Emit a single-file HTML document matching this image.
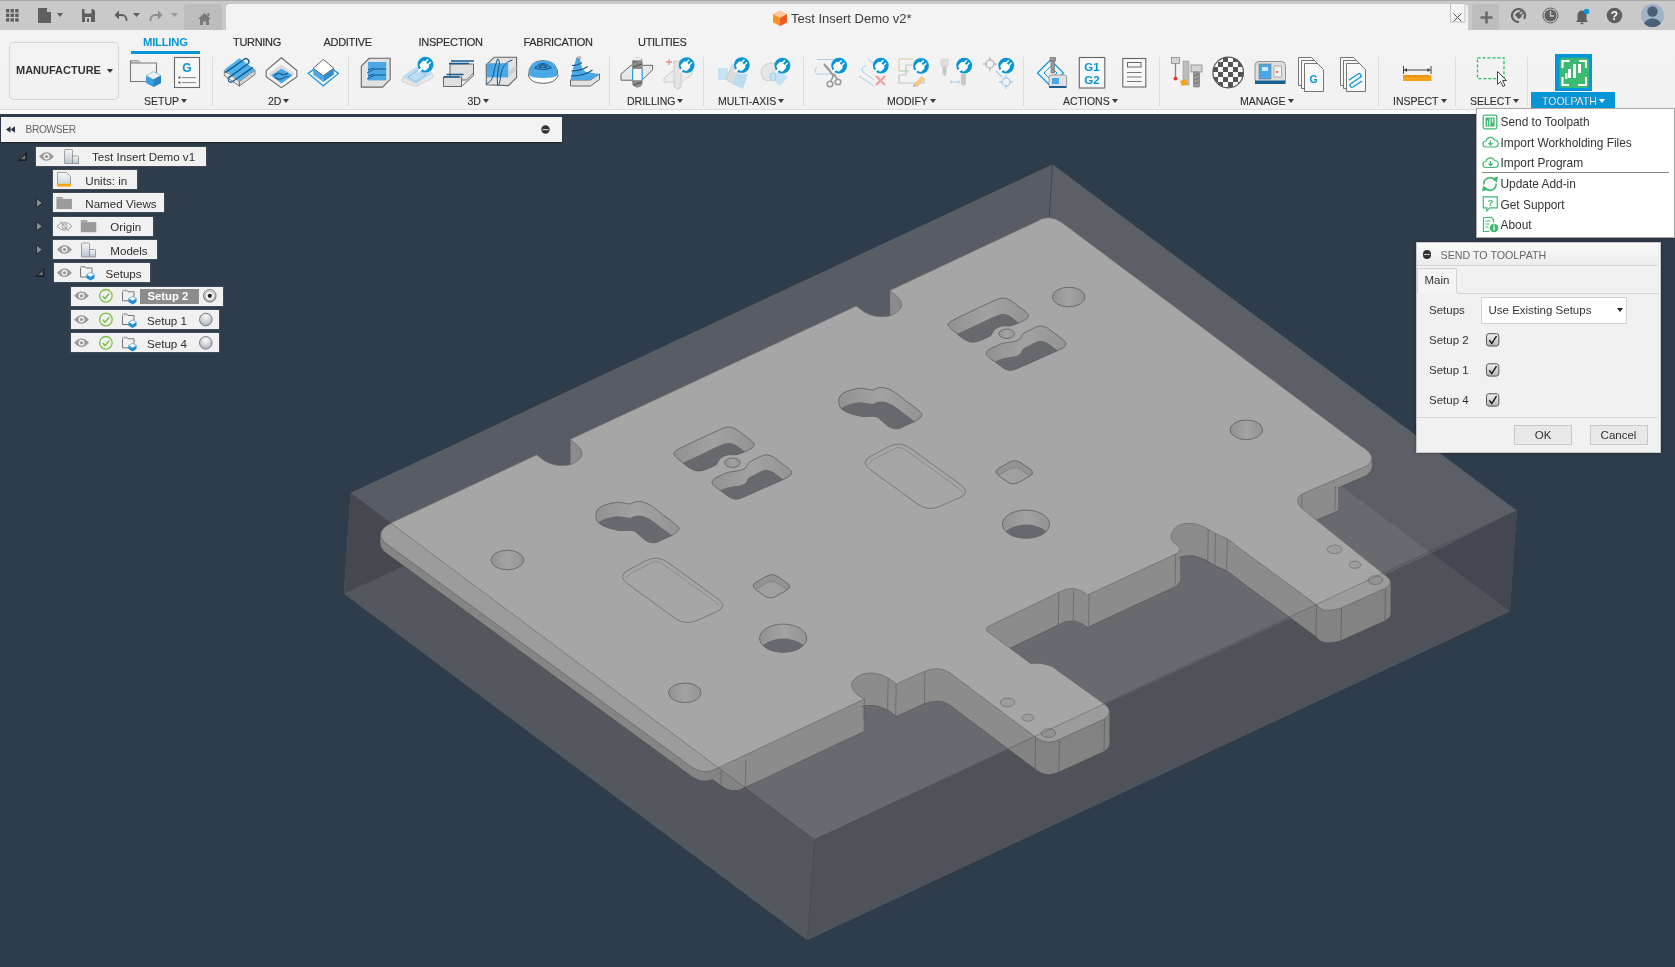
<!DOCTYPE html>
<html><head><meta charset="utf-8">
<style>
*{box-sizing:border-box;margin:0;padding:0}
html,body{will-change:transform;width:1675px;height:967px;overflow:hidden;background:#2f3c4b;font-family:"Liberation Sans",sans-serif;position:relative}
.abs{position:absolute}
#titlebar{left:0;top:0;width:1675px;height:30px;background:#c9c9c9;border-top:1px solid #a8a8a8}
#ribbon{left:0;top:30px;width:1675px;height:83.5px;background:linear-gradient(#f3f3f3 0,#f2f2f2 79.5px,#dcdcdc 79.5px,#dcdcdc 80.5px,#fdfdfd 80.5px,#fbfbfb 83.5px)}
.tab{position:absolute;top:35.5px;font-size:11px;color:#2e2e2e;white-space:nowrap;letter-spacing:-0.3px;-webkit-text-stroke:0.15px #2e2e2e}
.lbl{position:absolute;top:94.5px;font-size:10.5px;color:#2e2e2e;white-space:nowrap;-webkit-text-stroke:0.1px #2e2e2e}
.sep{position:absolute;top:57px;width:1px;height:49px;background:#dcdcdc}
.arr{display:inline-block;width:0;height:0;border-left:3px solid transparent;border-right:3px solid transparent;border-top:4px solid #3c3c3c;vertical-align:2px;margin-left:2px}
.row{position:absolute;height:19.3px;background:#f1f1f1;box-shadow:0 0 0 1px rgba(80,90,100,.5)}
.rt{position:absolute;top:3.5px;font-size:11.6px;color:#2e2e2e;white-space:nowrap}
.mi{position:absolute;left:23.5px;font-size:11.9px;color:#333;white-space:nowrap;margin-top:0.5px}
</style></head><body>
<svg width="1675" height="854" viewBox="0 113 1675 854" style="position:absolute;left:0;top:113px">
<defs>
<path id="pl" d="M1037.0,221.3 Q1048.6,213.5 1062.0,222.6 L1359.5,445.0 Q1380.0,457.0 1366.0,466.3 L1302.0,494.0 Q1293.0,500.0 1302.0,508.5 L1387.9,577.5 Q1394.0,583.0 1385.5,588.2 L1340.3,608.4 Q1322.0,614.0 1316.5,604.8 L1250.0,555.9 L1227.0,538.6 C1223.5,537.1 1219.9,535.7 1216.5,534.0 C1212.1,531.8 1208.1,528.6 1203.5,526.8 C1199.1,525.0 1194.5,523.4 1189.8,523.3 C1185.6,523.2 1181.0,523.9 1177.4,526.1 C1174.4,528.0 1172.3,531.4 1171.2,534.8 C1170.5,536.8 1171.3,539.2 1172.4,541.0 C1174.3,544.0 1178.7,545.2 1179.9,548.5 C1180.6,550.3 1177.8,551.8 1176.8,553.5 L1087.5,595.0 Q1074.0,584.0 1060.5,591.5 L989.2,626.0 Q983.0,629.0 989.2,632.8 L1030.9,663.7 Q1041.0,662.0 1052.4,666.9 L1106.2,705.4 Q1113.0,712.0 1104.9,718.8 L1060.5,739.0 Q1047.0,746.0 1036.3,737.6 L950.2,673.1 Q939.0,665.0 923.4,671.8 L896.5,683.9 C893.8,682.0 891.3,679.9 888.4,678.3 C885.2,676.6 882.0,675.0 878.5,674.0 C875.7,673.2 872.7,672.9 869.8,673.0 C866.6,673.2 863.3,673.5 860.5,674.9 C857.3,676.5 854.5,678.9 852.4,681.7 C851.4,683.1 851.3,685.1 851.8,686.7 C852.6,689.3 854.2,691.6 856.1,693.5 C858.4,695.8 861.5,697.2 864.2,699.1 L714.9,769.3 Q704.0,775.0 692.2,767.5 L384.0,542.0 Q374.0,531.0 393.0,522.0 L536.7,454.8 C539.5,456.9 542.1,459.4 545.1,461.1 C548.0,462.7 551.2,464.0 554.4,464.8 C557.5,465.5 560.7,465.7 563.8,465.5 C567.0,465.3 570.3,465.1 573.1,463.6 C576.6,461.7 580.2,459.1 581.8,455.5 C582.8,453.2 581.4,450.2 579.9,448.1 C577.3,444.6 573.3,442.3 570.0,439.4 L856.4,305.9 C859.2,308.0 861.8,310.5 864.8,312.2 C867.7,313.8 870.9,315.1 874.1,315.9 C877.2,316.6 880.4,316.8 883.5,316.6 C886.7,316.4 890.0,316.2 892.8,314.7 C896.3,312.8 899.9,310.2 901.5,306.6 C902.5,304.3 901.1,301.3 899.6,299.2 C897.0,295.7 893.0,293.4 889.7,290.5 Z"/>
<clipPath id="tallclip"><path d="M300,471.5 L721.3,785 Q731,793 745.9,788 L745.9,967 L1700,967 L1700,530 L1338,530 L1338,430 L1700,430 L1700,100 L300,100 Z"/></clipPath>
<linearGradient id="gw" x1="0" x2="1" y1="0" y2="0"><stop offset="0" stop-color="#929292"/><stop offset="0.5" stop-color="#a2a2a2"/><stop offset="1" stop-color="#949494"/></linearGradient>
<clipPath id="dc0"><ellipse cx="1026.0" cy="524.2" rx="23.6" ry="14.1"/></clipPath>
<clipPath id="dc1"><ellipse cx="783.2" cy="638.2" rx="23.6" ry="14.1"/></clipPath>
<clipPath id="kc0"><path d="M838.7,401.1 C838.7,398.3 840.0,395.1 842.4,393.6 C847.4,390.5 853.4,389.2 859.2,388.3 C862.7,387.8 866.2,389.2 869.7,389.6 C870.9,389.7 872.2,390.1 873.4,389.9 C874.5,389.7 875.4,388.5 876.5,388.3 C879.0,387.8 881.5,387.2 884.0,387.7 C887.3,388.3 890.4,389.7 893.3,391.4 C897.8,394.1 901.8,397.8 906.0,401.0 C910.7,404.5 915.7,407.7 920.0,411.6 C921.0,412.5 922.4,414.1 921.8,415.3 C920.6,417.8 917.9,419.4 915.6,420.9 C913.0,422.6 909.9,423.5 907.0,424.8 C904.1,426.1 901.4,428.3 898.2,428.7 C895.3,429.1 892.2,428.4 889.6,427.1 C886.7,425.7 884.6,423.0 882.0,421.0 C880.0,419.5 878.3,417.1 875.9,416.6 C871.1,415.5 865.9,417.3 861.0,416.3 C854.6,415.0 847.8,413.4 842.4,409.7 C839.8,407.9 838.7,404.2 838.7,401.1 Z"/></clipPath>
<clipPath id="kc1"><path d="M595.9,515.1 C595.9,512.3 597.2,509.1 599.6,507.6 C604.6,504.5 610.6,503.2 616.4,502.3 C619.9,501.8 623.4,503.2 626.9,503.6 C628.1,503.7 629.4,504.1 630.6,503.9 C631.7,503.7 632.6,502.5 633.7,502.3 C636.2,501.8 638.7,501.2 641.2,501.7 C644.5,502.3 647.6,503.7 650.5,505.4 C655.0,508.1 659.0,511.8 663.2,515.0 C667.9,518.5 672.9,521.7 677.2,525.6 C678.2,526.5 679.6,528.1 679.0,529.3 C677.8,531.8 675.1,533.4 672.8,534.9 C670.2,536.6 667.1,537.5 664.2,538.8 C661.3,540.1 658.6,542.3 655.4,542.7 C652.5,543.1 649.4,542.4 646.8,541.1 C643.9,539.7 641.8,537.0 639.2,535.0 C637.2,533.5 635.5,531.1 633.1,530.6 C628.3,529.5 623.1,531.3 618.2,530.3 C611.8,529.0 605.0,527.4 599.6,523.7 C597.0,521.9 595.9,518.2 595.9,515.1 Z"/></clipPath>
<clipPath id="pc00"><path d="M948.1,325.0 C947.5,323.7 949.4,322.1 950.7,321.4 C958.2,317.1 966.2,313.7 974.0,310.0 C982.1,306.2 990.0,302.2 998.3,298.9 C1000.1,298.2 1002.0,297.9 1003.9,298.1 C1006.1,298.3 1008.3,299.1 1010.2,300.2 C1013.0,301.8 1015.4,304.0 1018.0,306.0 C1021.1,308.3 1024.4,310.5 1027.2,313.1 C1027.9,313.8 1028.7,314.7 1028.5,315.7 C1028.3,317.1 1027.4,318.6 1026.2,319.3 C1021.7,321.9 1016.8,324.1 1011.7,325.5 C1008.5,326.4 1005.1,325.4 1001.9,326.0 C999.7,326.4 997.6,327.4 995.7,328.6 C994.4,329.5 993.5,330.9 992.6,332.2 C991.8,333.3 991.7,335.1 990.5,335.8 C986.3,338.3 981.7,340.0 977.1,341.5 C975.1,342.1 972.9,342.3 970.9,342.0 C968.7,341.6 966.5,340.7 964.6,339.5 C961.5,337.6 958.7,335.4 956.0,333.0 C953.2,330.5 949.7,328.4 948.1,325.0 Z"/></clipPath>
<clipPath id="pc01"><path d="M986.3,353.0 C986.5,351.6 987.7,350.4 988.8,349.6 C990.6,348.3 992.8,347.7 994.8,346.7 C996.8,345.8 998.7,344.6 1000.8,343.9 C1002.4,343.3 1004.2,343.1 1005.9,342.8 C1008.9,342.2 1012.0,342.1 1015.0,341.3 C1016.8,340.8 1018.7,340.0 1020.1,338.8 C1021.1,338.0 1021.1,336.4 1021.8,335.4 C1022.4,334.5 1023.2,333.7 1024.1,333.1 C1026.0,331.9 1028.0,331.0 1030.0,330.0 C1032.2,328.9 1034.3,327.6 1036.6,326.8 C1038.1,326.3 1039.7,325.8 1041.2,326.0 C1043.4,326.2 1045.5,326.9 1047.4,328.0 C1050.3,329.6 1052.8,332.0 1055.5,334.0 C1058.3,336.1 1061.3,338.1 1063.9,340.5 C1064.9,341.4 1066.1,342.6 1065.9,343.9 C1065.7,345.6 1064.3,347.1 1062.8,347.9 C1055.5,352.0 1047.6,355.0 1040.0,358.4 C1032.1,362.0 1024.2,365.7 1016.1,368.9 C1014.3,369.6 1012.4,370.3 1010.4,370.3 C1008.5,370.3 1006.5,369.8 1004.8,368.9 C1001.6,367.2 998.9,364.6 996.0,362.5 C993.2,360.5 990.2,358.8 987.7,356.4 C986.8,355.5 986.1,354.2 986.3,353.0 Z"/></clipPath>
<clipPath id="pc10"><path d="M673.8,453.9 C673.2,452.6 675.1,451.0 676.4,450.3 C683.9,446.0 691.9,442.6 699.7,438.9 C707.8,435.1 715.7,431.1 724.0,427.8 C725.8,427.1 727.7,426.8 729.6,427.0 C731.8,427.2 734.0,428.0 735.9,429.1 C738.7,430.7 741.1,432.9 743.7,434.9 C746.8,437.2 750.1,439.4 752.9,442.0 C753.6,442.7 754.4,443.6 754.2,444.6 C754.0,446.0 753.1,447.5 751.9,448.2 C747.4,450.8 742.5,453.0 737.4,454.4 C734.2,455.3 730.8,454.3 727.6,454.9 C725.4,455.3 723.3,456.3 721.4,457.5 C720.1,458.4 719.2,459.8 718.3,461.1 C717.5,462.2 717.4,464.0 716.2,464.7 C712.0,467.2 707.4,468.9 702.8,470.4 C700.8,471.0 698.6,471.2 696.6,470.9 C694.4,470.5 692.2,469.6 690.3,468.4 C687.2,466.5 684.4,464.3 681.7,461.9 C678.9,459.4 675.4,457.3 673.8,453.9 Z"/></clipPath>
<clipPath id="pc11"><path d="M712.0,481.9 C712.2,480.5 713.4,479.3 714.5,478.5 C716.3,477.2 718.5,476.6 720.5,475.6 C722.5,474.7 724.4,473.5 726.5,472.8 C728.1,472.2 729.9,472.0 731.6,471.7 C734.6,471.1 737.7,471.0 740.7,470.2 C742.5,469.7 744.4,468.9 745.8,467.7 C746.8,466.9 746.8,465.3 747.5,464.3 C748.1,463.4 748.9,462.6 749.8,462.0 C751.7,460.8 753.7,459.9 755.7,458.9 C757.9,457.8 760.0,456.5 762.3,455.7 C763.8,455.2 765.4,454.7 766.9,454.9 C769.1,455.1 771.2,455.8 773.1,456.9 C776.0,458.5 778.5,460.9 781.2,462.9 C784.0,465.0 787.0,467.0 789.6,469.4 C790.6,470.3 791.8,471.5 791.6,472.8 C791.4,474.5 790.0,476.0 788.5,476.8 C781.2,480.9 773.3,483.9 765.7,487.3 C757.8,490.9 749.9,494.6 741.8,497.8 C740.0,498.5 738.1,499.2 736.1,499.2 C734.2,499.2 732.2,498.7 730.5,497.8 C727.3,496.1 724.6,493.5 721.7,491.4 C718.9,489.4 715.9,487.7 713.4,485.3 C712.5,484.4 711.8,483.1 712.0,481.9 Z"/></clipPath>
<clipPath id="sq0"><path d="M998.7,475.7 Q993.0,471.6 999.1,468.1 L1009.1,462.3 Q1015.2,458.8 1021.0,462.8 L1029.7,468.8 Q1035.5,472.8 1029.4,476.3 L1018.9,482.3 Q1012.8,485.8 1007.1,481.7 Z"/></clipPath>
<clipPath id="sq1"><path d="M755.9,589.7 Q750.2,585.6 756.3,582.1 L766.3,576.3 Q772.4,572.8 778.2,576.8 L786.9,582.8 Q792.7,586.8 786.6,590.3 L776.1,596.3 Q770.0,599.8 764.3,595.7 Z"/></clipPath>
</defs>
<polygon points="350.6,493.0 1052.5,164.6 1516.7,510.6 1509.8,611.2 807.4,940.1 344.0,593.8" fill="#5a5d64"/>
<polygon points="350.6,493.0 814.5,839.6 807.4,940.1 344.0,593.8" fill="#5a5e64"/>
<polygon points="814.5,839.6 1516.7,510.6 1509.8,611.2 807.4,940.1" fill="#555860"/>
<polygon points="350.6,493.0 431.0,553.5 344.0,593.8" fill="#4a4d54"/>
<polygon points="1516.7,510.6 1509.8,611.2 1431.4,553.0" fill="#494c54"/>
<polygon points="431.0,553.5 1046.0,265.0 1431.4,553.0 814.5,839.6" fill="#686a70"/>
<polygon points="350.6,493.0 1052.5,164.6 1046.0,265.0 431.0,553.5" fill="#585c64"/>
<polygon points="1052.5,164.6 1516.7,510.6 1431.4,553.0 1046.0,265.0" fill="#5c5f66"/>
<line x1="1052.5" y1="164.6" x2="1049" y2="222" stroke="#41444b" stroke-width="0.9"/>
<g fill="#8e8e8e"><use href="#pl" y="9" stroke="#5a5a5a" stroke-width="1.3"/><use href="#pl" y="1"/><use href="#pl" y="2"/><use href="#pl" y="3"/><use href="#pl" y="4"/><use href="#pl" y="5"/><use href="#pl" y="6"/><use href="#pl" y="7"/><use href="#pl" y="8"/><use href="#pl" y="9"/></g>
<g fill="#8c8c8c" clip-path="url(#tallclip)"><use href="#pl" y="32" stroke="#5a5a5a" stroke-width="1.3"/><use href="#pl" y="10"/><use href="#pl" y="11"/><use href="#pl" y="12"/><use href="#pl" y="13"/><use href="#pl" y="14"/><use href="#pl" y="15"/><use href="#pl" y="16"/><use href="#pl" y="17"/><use href="#pl" y="18"/><use href="#pl" y="19"/><use href="#pl" y="20"/><use href="#pl" y="21"/><use href="#pl" y="22"/><use href="#pl" y="23"/><use href="#pl" y="24"/><use href="#pl" y="25"/><use href="#pl" y="26"/><use href="#pl" y="27"/><use href="#pl" y="28"/><use href="#pl" y="29"/><use href="#pl" y="30"/><use href="#pl" y="31"/><use href="#pl" y="32"/></g>
<g stroke="#5e5e5e" stroke-width="0.8" opacity="0.8"><line x1="1058.9" y1="592" x2="1058.3000000000002" y2="624"/><line x1="1073.7" y1="590" x2="1073.1000000000001" y2="621"/><line x1="1089.1" y1="594" x2="1088.5" y2="626"/><line x1="1035.6" y1="737" x2="1035.0" y2="771.5"/><line x1="1059.4" y1="739" x2="1058.8000000000002" y2="772"/><line x1="1104.6" y1="718" x2="1104.0" y2="751"/><line x1="1316.5" y1="604" x2="1315.9" y2="642"/><line x1="1341.5" y1="607" x2="1340.9" y2="642"/><line x1="1385.5" y1="588" x2="1384.9" y2="620"/><line x1="1302.2" y1="494" x2="1301.6000000000001" y2="513"/><line x1="1335.5" y1="486" x2="1334.9" y2="510"/><line x1="1175.7" y1="553.7" x2="1175.1000000000001" y2="584.6"/><line x1="1208.3" y1="528" x2="1207.7" y2="563"/><line x1="1215.4" y1="534" x2="1214.8000000000002" y2="567"/><line x1="1227.3" y1="538" x2="1226.7" y2="570"/><line x1="889.7" y1="290.5" x2="889.1" y2="316"/><line x1="570" y1="439.4" x2="569.4" y2="465"/><line x1="888.1" y1="678.6" x2="887.5" y2="711.5"/><line x1="896.2" y1="684" x2="895.6" y2="718"/><line x1="925" y1="671" x2="924.4" y2="704"/><line x1="864.5" y1="699" x2="863.9" y2="720"/><line x1="721.3" y1="770" x2="720.6999999999999" y2="785"/><line x1="745.9" y1="760" x2="745.3" y2="788"/></g>
<use href="#pl" fill="#a6a6a6" stroke="#6e6e6e" stroke-width="0.8"/>
<ellipse cx="1068.7" cy="297" rx="16.3" ry="9.8" fill="url(#gw)" stroke="#5e5e5e" stroke-width="0.8"/>
<ellipse cx="1246.4" cy="429.8" rx="16.3" ry="9.8" fill="url(#gw)" stroke="#5e5e5e" stroke-width="0.8"/>
<ellipse cx="507.3" cy="560" rx="16.3" ry="9.8" fill="url(#gw)" stroke="#5e5e5e" stroke-width="0.8"/>
<ellipse cx="684.9" cy="692.8" rx="16.3" ry="9.8" fill="url(#gw)" stroke="#5e5e5e" stroke-width="0.8"/>
<ellipse cx="1026.0" cy="524.2" rx="23.6" ry="14.1" fill="url(#gw)"/>
<ellipse cx="1026.0" cy="538.7" rx="23.6" ry="14.1" fill="#67696e" clip-path="url(#dc0)"/>
<ellipse cx="1026.0" cy="524.2" rx="23.6" ry="14.1" fill="none" stroke="#5e5e5e" stroke-width="0.8"/>
<ellipse cx="783.2" cy="638.2" rx="23.6" ry="14.1" fill="url(#gw)"/>
<ellipse cx="783.2" cy="652.7" rx="23.6" ry="14.1" fill="#67696e" clip-path="url(#dc1)"/>
<ellipse cx="783.2" cy="638.2" rx="23.6" ry="14.1" fill="none" stroke="#5e5e5e" stroke-width="0.8"/>
<path d="M838.7,401.1 C838.7,398.3 840.0,395.1 842.4,393.6 C847.4,390.5 853.4,389.2 859.2,388.3 C862.7,387.8 866.2,389.2 869.7,389.6 C870.9,389.7 872.2,390.1 873.4,389.9 C874.5,389.7 875.4,388.5 876.5,388.3 C879.0,387.8 881.5,387.2 884.0,387.7 C887.3,388.3 890.4,389.7 893.3,391.4 C897.8,394.1 901.8,397.8 906.0,401.0 C910.7,404.5 915.7,407.7 920.0,411.6 C921.0,412.5 922.4,414.1 921.8,415.3 C920.6,417.8 917.9,419.4 915.6,420.9 C913.0,422.6 909.9,423.5 907.0,424.8 C904.1,426.1 901.4,428.3 898.2,428.7 C895.3,429.1 892.2,428.4 889.6,427.1 C886.7,425.7 884.6,423.0 882.0,421.0 C880.0,419.5 878.3,417.1 875.9,416.6 C871.1,415.5 865.9,417.3 861.0,416.3 C854.6,415.0 847.8,413.4 842.4,409.7 C839.8,407.9 838.7,404.2 838.7,401.1 Z" fill="url(#gw)"/>
<path d="M838.7,415.1 C838.7,412.3 840.0,409.1 842.4,407.6 C847.4,404.5 853.4,403.2 859.2,402.3 C862.7,401.8 866.2,403.2 869.7,403.6 C870.9,403.7 872.2,404.1 873.4,403.9 C874.5,403.7 875.4,402.5 876.5,402.3 C879.0,401.8 881.5,401.2 884.0,401.7 C887.3,402.3 890.4,403.7 893.3,405.4 C897.8,408.1 901.8,411.8 906.0,415.0 C910.7,418.5 915.7,421.7 920.0,425.6 C921.0,426.5 922.4,428.1 921.8,429.3 C920.6,431.8 917.9,433.4 915.6,434.9 C913.0,436.6 909.9,437.5 907.0,438.8 C904.1,440.1 901.4,442.3 898.2,442.7 C895.3,443.1 892.2,442.4 889.6,441.1 C886.7,439.7 884.6,437.0 882.0,435.0 C880.0,433.5 878.3,431.1 875.9,430.6 C871.1,429.5 865.9,431.3 861.0,430.3 C854.6,429.0 847.8,427.4 842.4,423.7 C839.8,421.9 838.7,418.2 838.7,415.1 Z" fill="#67696e" clip-path="url(#kc0)"/>
<path d="M838.7,401.1 C838.7,398.3 840.0,395.1 842.4,393.6 C847.4,390.5 853.4,389.2 859.2,388.3 C862.7,387.8 866.2,389.2 869.7,389.6 C870.9,389.7 872.2,390.1 873.4,389.9 C874.5,389.7 875.4,388.5 876.5,388.3 C879.0,387.8 881.5,387.2 884.0,387.7 C887.3,388.3 890.4,389.7 893.3,391.4 C897.8,394.1 901.8,397.8 906.0,401.0 C910.7,404.5 915.7,407.7 920.0,411.6 C921.0,412.5 922.4,414.1 921.8,415.3 C920.6,417.8 917.9,419.4 915.6,420.9 C913.0,422.6 909.9,423.5 907.0,424.8 C904.1,426.1 901.4,428.3 898.2,428.7 C895.3,429.1 892.2,428.4 889.6,427.1 C886.7,425.7 884.6,423.0 882.0,421.0 C880.0,419.5 878.3,417.1 875.9,416.6 C871.1,415.5 865.9,417.3 861.0,416.3 C854.6,415.0 847.8,413.4 842.4,409.7 C839.8,407.9 838.7,404.2 838.7,401.1 Z" fill="none" stroke="#5e5e5e" stroke-width="0.8"/>
<path d="M595.9,515.1 C595.9,512.3 597.2,509.1 599.6,507.6 C604.6,504.5 610.6,503.2 616.4,502.3 C619.9,501.8 623.4,503.2 626.9,503.6 C628.1,503.7 629.4,504.1 630.6,503.9 C631.7,503.7 632.6,502.5 633.7,502.3 C636.2,501.8 638.7,501.2 641.2,501.7 C644.5,502.3 647.6,503.7 650.5,505.4 C655.0,508.1 659.0,511.8 663.2,515.0 C667.9,518.5 672.9,521.7 677.2,525.6 C678.2,526.5 679.6,528.1 679.0,529.3 C677.8,531.8 675.1,533.4 672.8,534.9 C670.2,536.6 667.1,537.5 664.2,538.8 C661.3,540.1 658.6,542.3 655.4,542.7 C652.5,543.1 649.4,542.4 646.8,541.1 C643.9,539.7 641.8,537.0 639.2,535.0 C637.2,533.5 635.5,531.1 633.1,530.6 C628.3,529.5 623.1,531.3 618.2,530.3 C611.8,529.0 605.0,527.4 599.6,523.7 C597.0,521.9 595.9,518.2 595.9,515.1 Z" fill="url(#gw)"/>
<path d="M595.9,529.1 C595.9,526.3 597.2,523.1 599.6,521.6 C604.6,518.5 610.6,517.2 616.4,516.3 C619.9,515.8 623.4,517.2 626.9,517.6 C628.1,517.7 629.4,518.1 630.6,517.9 C631.7,517.7 632.6,516.5 633.7,516.3 C636.2,515.8 638.7,515.2 641.2,515.7 C644.5,516.3 647.6,517.7 650.5,519.4 C655.0,522.1 659.0,525.8 663.2,529.0 C667.9,532.5 672.9,535.7 677.2,539.6 C678.2,540.5 679.6,542.1 679.0,543.3 C677.8,545.8 675.1,547.4 672.8,548.9 C670.2,550.6 667.1,551.5 664.2,552.8 C661.3,554.1 658.6,556.3 655.4,556.7 C652.5,557.1 649.4,556.4 646.8,555.1 C643.9,553.7 641.8,551.0 639.2,549.0 C637.2,547.5 635.5,545.1 633.1,544.6 C628.3,543.5 623.1,545.3 618.2,544.3 C611.8,543.0 605.0,541.4 599.6,537.7 C597.0,535.9 595.9,532.2 595.9,529.1 Z" fill="#67696e" clip-path="url(#kc1)"/>
<path d="M595.9,515.1 C595.9,512.3 597.2,509.1 599.6,507.6 C604.6,504.5 610.6,503.2 616.4,502.3 C619.9,501.8 623.4,503.2 626.9,503.6 C628.1,503.7 629.4,504.1 630.6,503.9 C631.7,503.7 632.6,502.5 633.7,502.3 C636.2,501.8 638.7,501.2 641.2,501.7 C644.5,502.3 647.6,503.7 650.5,505.4 C655.0,508.1 659.0,511.8 663.2,515.0 C667.9,518.5 672.9,521.7 677.2,525.6 C678.2,526.5 679.6,528.1 679.0,529.3 C677.8,531.8 675.1,533.4 672.8,534.9 C670.2,536.6 667.1,537.5 664.2,538.8 C661.3,540.1 658.6,542.3 655.4,542.7 C652.5,543.1 649.4,542.4 646.8,541.1 C643.9,539.7 641.8,537.0 639.2,535.0 C637.2,533.5 635.5,531.1 633.1,530.6 C628.3,529.5 623.1,531.3 618.2,530.3 C611.8,529.0 605.0,527.4 599.6,523.7 C597.0,521.9 595.9,518.2 595.9,515.1 Z" fill="none" stroke="#5e5e5e" stroke-width="0.8"/>
<path d="M948.1,325.0 C947.5,323.7 949.4,322.1 950.7,321.4 C958.2,317.1 966.2,313.7 974.0,310.0 C982.1,306.2 990.0,302.2 998.3,298.9 C1000.1,298.2 1002.0,297.9 1003.9,298.1 C1006.1,298.3 1008.3,299.1 1010.2,300.2 C1013.0,301.8 1015.4,304.0 1018.0,306.0 C1021.1,308.3 1024.4,310.5 1027.2,313.1 C1027.9,313.8 1028.7,314.7 1028.5,315.7 C1028.3,317.1 1027.4,318.6 1026.2,319.3 C1021.7,321.9 1016.8,324.1 1011.7,325.5 C1008.5,326.4 1005.1,325.4 1001.9,326.0 C999.7,326.4 997.6,327.4 995.7,328.6 C994.4,329.5 993.5,330.9 992.6,332.2 C991.8,333.3 991.7,335.1 990.5,335.8 C986.3,338.3 981.7,340.0 977.1,341.5 C975.1,342.1 972.9,342.3 970.9,342.0 C968.7,341.6 966.5,340.7 964.6,339.5 C961.5,337.6 958.7,335.4 956.0,333.0 C953.2,330.5 949.7,328.4 948.1,325.0 Z" fill="url(#gw)"/>
<path d="M948.1,341.0 C947.5,339.7 949.4,338.1 950.7,337.4 C958.2,333.1 966.2,329.7 974.0,326.0 C982.1,322.2 990.0,318.2 998.3,314.9 C1000.1,314.2 1002.0,313.9 1003.9,314.1 C1006.1,314.3 1008.3,315.1 1010.2,316.2 C1013.0,317.8 1015.4,320.0 1018.0,322.0 C1021.1,324.3 1024.4,326.5 1027.2,329.1 C1027.9,329.8 1028.7,330.7 1028.5,331.7 C1028.3,333.1 1027.4,334.6 1026.2,335.3 C1021.7,337.9 1016.8,340.1 1011.7,341.5 C1008.5,342.4 1005.1,341.4 1001.9,342.0 C999.7,342.4 997.6,343.4 995.7,344.6 C994.4,345.5 993.5,346.9 992.6,348.2 C991.8,349.3 991.7,351.1 990.5,351.8 C986.3,354.3 981.7,356.0 977.1,357.5 C975.1,358.1 972.9,358.3 970.9,358.0 C968.7,357.6 966.5,356.7 964.6,355.5 C961.5,353.6 958.7,351.4 956.0,349.0 C953.2,346.5 949.7,344.4 948.1,341.0 Z" fill="#67696e" clip-path="url(#pc00)"/>
<path d="M948.1,325.0 C947.5,323.7 949.4,322.1 950.7,321.4 C958.2,317.1 966.2,313.7 974.0,310.0 C982.1,306.2 990.0,302.2 998.3,298.9 C1000.1,298.2 1002.0,297.9 1003.9,298.1 C1006.1,298.3 1008.3,299.1 1010.2,300.2 C1013.0,301.8 1015.4,304.0 1018.0,306.0 C1021.1,308.3 1024.4,310.5 1027.2,313.1 C1027.9,313.8 1028.7,314.7 1028.5,315.7 C1028.3,317.1 1027.4,318.6 1026.2,319.3 C1021.7,321.9 1016.8,324.1 1011.7,325.5 C1008.5,326.4 1005.1,325.4 1001.9,326.0 C999.7,326.4 997.6,327.4 995.7,328.6 C994.4,329.5 993.5,330.9 992.6,332.2 C991.8,333.3 991.7,335.1 990.5,335.8 C986.3,338.3 981.7,340.0 977.1,341.5 C975.1,342.1 972.9,342.3 970.9,342.0 C968.7,341.6 966.5,340.7 964.6,339.5 C961.5,337.6 958.7,335.4 956.0,333.0 C953.2,330.5 949.7,328.4 948.1,325.0 Z" fill="none" stroke="#5e5e5e" stroke-width="0.8"/>
<path d="M986.3,353.0 C986.5,351.6 987.7,350.4 988.8,349.6 C990.6,348.3 992.8,347.7 994.8,346.7 C996.8,345.8 998.7,344.6 1000.8,343.9 C1002.4,343.3 1004.2,343.1 1005.9,342.8 C1008.9,342.2 1012.0,342.1 1015.0,341.3 C1016.8,340.8 1018.7,340.0 1020.1,338.8 C1021.1,338.0 1021.1,336.4 1021.8,335.4 C1022.4,334.5 1023.2,333.7 1024.1,333.1 C1026.0,331.9 1028.0,331.0 1030.0,330.0 C1032.2,328.9 1034.3,327.6 1036.6,326.8 C1038.1,326.3 1039.7,325.8 1041.2,326.0 C1043.4,326.2 1045.5,326.9 1047.4,328.0 C1050.3,329.6 1052.8,332.0 1055.5,334.0 C1058.3,336.1 1061.3,338.1 1063.9,340.5 C1064.9,341.4 1066.1,342.6 1065.9,343.9 C1065.7,345.6 1064.3,347.1 1062.8,347.9 C1055.5,352.0 1047.6,355.0 1040.0,358.4 C1032.1,362.0 1024.2,365.7 1016.1,368.9 C1014.3,369.6 1012.4,370.3 1010.4,370.3 C1008.5,370.3 1006.5,369.8 1004.8,368.9 C1001.6,367.2 998.9,364.6 996.0,362.5 C993.2,360.5 990.2,358.8 987.7,356.4 C986.8,355.5 986.1,354.2 986.3,353.0 Z" fill="url(#gw)"/>
<path d="M986.3,368.0 C986.5,366.6 987.7,365.4 988.8,364.6 C990.6,363.3 992.8,362.7 994.8,361.7 C996.8,360.8 998.7,359.6 1000.8,358.9 C1002.4,358.3 1004.2,358.1 1005.9,357.8 C1008.9,357.2 1012.0,357.1 1015.0,356.3 C1016.8,355.8 1018.7,355.0 1020.1,353.8 C1021.1,353.0 1021.1,351.4 1021.8,350.4 C1022.4,349.5 1023.2,348.7 1024.1,348.1 C1026.0,346.9 1028.0,346.0 1030.0,345.0 C1032.2,343.9 1034.3,342.6 1036.6,341.8 C1038.1,341.3 1039.7,340.8 1041.2,341.0 C1043.4,341.2 1045.5,341.9 1047.4,343.0 C1050.3,344.6 1052.8,347.0 1055.5,349.0 C1058.3,351.1 1061.3,353.1 1063.9,355.5 C1064.9,356.4 1066.1,357.6 1065.9,358.9 C1065.7,360.6 1064.3,362.1 1062.8,362.9 C1055.5,367.0 1047.6,370.0 1040.0,373.4 C1032.1,377.0 1024.2,380.7 1016.1,383.9 C1014.3,384.6 1012.4,385.3 1010.4,385.3 C1008.5,385.3 1006.5,384.8 1004.8,383.9 C1001.6,382.2 998.9,379.6 996.0,377.5 C993.2,375.5 990.2,373.8 987.7,371.4 C986.8,370.5 986.1,369.2 986.3,368.0 Z" fill="#67696e" clip-path="url(#pc01)"/>
<path d="M986.3,353.0 C986.5,351.6 987.7,350.4 988.8,349.6 C990.6,348.3 992.8,347.7 994.8,346.7 C996.8,345.8 998.7,344.6 1000.8,343.9 C1002.4,343.3 1004.2,343.1 1005.9,342.8 C1008.9,342.2 1012.0,342.1 1015.0,341.3 C1016.8,340.8 1018.7,340.0 1020.1,338.8 C1021.1,338.0 1021.1,336.4 1021.8,335.4 C1022.4,334.5 1023.2,333.7 1024.1,333.1 C1026.0,331.9 1028.0,331.0 1030.0,330.0 C1032.2,328.9 1034.3,327.6 1036.6,326.8 C1038.1,326.3 1039.7,325.8 1041.2,326.0 C1043.4,326.2 1045.5,326.9 1047.4,328.0 C1050.3,329.6 1052.8,332.0 1055.5,334.0 C1058.3,336.1 1061.3,338.1 1063.9,340.5 C1064.9,341.4 1066.1,342.6 1065.9,343.9 C1065.7,345.6 1064.3,347.1 1062.8,347.9 C1055.5,352.0 1047.6,355.0 1040.0,358.4 C1032.1,362.0 1024.2,365.7 1016.1,368.9 C1014.3,369.6 1012.4,370.3 1010.4,370.3 C1008.5,370.3 1006.5,369.8 1004.8,368.9 C1001.6,367.2 998.9,364.6 996.0,362.5 C993.2,360.5 990.2,358.8 987.7,356.4 C986.8,355.5 986.1,354.2 986.3,353.0 Z" fill="none" stroke="#5e5e5e" stroke-width="0.8"/>
<ellipse cx="1006.7" cy="333.8" rx="7.8" ry="4.7" fill="url(#gw)" stroke="#5e5e5e" stroke-width="0.8"/>
<path d="M673.8,453.9 C673.2,452.6 675.1,451.0 676.4,450.3 C683.9,446.0 691.9,442.6 699.7,438.9 C707.8,435.1 715.7,431.1 724.0,427.8 C725.8,427.1 727.7,426.8 729.6,427.0 C731.8,427.2 734.0,428.0 735.9,429.1 C738.7,430.7 741.1,432.9 743.7,434.9 C746.8,437.2 750.1,439.4 752.9,442.0 C753.6,442.7 754.4,443.6 754.2,444.6 C754.0,446.0 753.1,447.5 751.9,448.2 C747.4,450.8 742.5,453.0 737.4,454.4 C734.2,455.3 730.8,454.3 727.6,454.9 C725.4,455.3 723.3,456.3 721.4,457.5 C720.1,458.4 719.2,459.8 718.3,461.1 C717.5,462.2 717.4,464.0 716.2,464.7 C712.0,467.2 707.4,468.9 702.8,470.4 C700.8,471.0 698.6,471.2 696.6,470.9 C694.4,470.5 692.2,469.6 690.3,468.4 C687.2,466.5 684.4,464.3 681.7,461.9 C678.9,459.4 675.4,457.3 673.8,453.9 Z" fill="url(#gw)"/>
<path d="M673.8,469.9 C673.2,468.6 675.1,467.0 676.4,466.3 C683.9,462.0 691.9,458.6 699.7,454.9 C707.8,451.1 715.7,447.1 724.0,443.8 C725.8,443.1 727.7,442.8 729.6,443.0 C731.8,443.2 734.0,444.0 735.9,445.1 C738.7,446.7 741.1,448.9 743.7,450.9 C746.8,453.2 750.1,455.4 752.9,458.0 C753.6,458.7 754.4,459.6 754.2,460.6 C754.0,462.0 753.1,463.5 751.9,464.2 C747.4,466.8 742.5,469.0 737.4,470.4 C734.2,471.3 730.8,470.3 727.6,470.9 C725.4,471.3 723.3,472.3 721.4,473.5 C720.1,474.4 719.2,475.8 718.3,477.1 C717.5,478.2 717.4,480.0 716.2,480.7 C712.0,483.2 707.4,484.9 702.8,486.4 C700.8,487.0 698.6,487.2 696.6,486.9 C694.4,486.5 692.2,485.6 690.3,484.4 C687.2,482.5 684.4,480.3 681.7,477.9 C678.9,475.4 675.4,473.3 673.8,469.9 Z" fill="#67696e" clip-path="url(#pc10)"/>
<path d="M673.8,453.9 C673.2,452.6 675.1,451.0 676.4,450.3 C683.9,446.0 691.9,442.6 699.7,438.9 C707.8,435.1 715.7,431.1 724.0,427.8 C725.8,427.1 727.7,426.8 729.6,427.0 C731.8,427.2 734.0,428.0 735.9,429.1 C738.7,430.7 741.1,432.9 743.7,434.9 C746.8,437.2 750.1,439.4 752.9,442.0 C753.6,442.7 754.4,443.6 754.2,444.6 C754.0,446.0 753.1,447.5 751.9,448.2 C747.4,450.8 742.5,453.0 737.4,454.4 C734.2,455.3 730.8,454.3 727.6,454.9 C725.4,455.3 723.3,456.3 721.4,457.5 C720.1,458.4 719.2,459.8 718.3,461.1 C717.5,462.2 717.4,464.0 716.2,464.7 C712.0,467.2 707.4,468.9 702.8,470.4 C700.8,471.0 698.6,471.2 696.6,470.9 C694.4,470.5 692.2,469.6 690.3,468.4 C687.2,466.5 684.4,464.3 681.7,461.9 C678.9,459.4 675.4,457.3 673.8,453.9 Z" fill="none" stroke="#5e5e5e" stroke-width="0.8"/>
<path d="M712.0,481.9 C712.2,480.5 713.4,479.3 714.5,478.5 C716.3,477.2 718.5,476.6 720.5,475.6 C722.5,474.7 724.4,473.5 726.5,472.8 C728.1,472.2 729.9,472.0 731.6,471.7 C734.6,471.1 737.7,471.0 740.7,470.2 C742.5,469.7 744.4,468.9 745.8,467.7 C746.8,466.9 746.8,465.3 747.5,464.3 C748.1,463.4 748.9,462.6 749.8,462.0 C751.7,460.8 753.7,459.9 755.7,458.9 C757.9,457.8 760.0,456.5 762.3,455.7 C763.8,455.2 765.4,454.7 766.9,454.9 C769.1,455.1 771.2,455.8 773.1,456.9 C776.0,458.5 778.5,460.9 781.2,462.9 C784.0,465.0 787.0,467.0 789.6,469.4 C790.6,470.3 791.8,471.5 791.6,472.8 C791.4,474.5 790.0,476.0 788.5,476.8 C781.2,480.9 773.3,483.9 765.7,487.3 C757.8,490.9 749.9,494.6 741.8,497.8 C740.0,498.5 738.1,499.2 736.1,499.2 C734.2,499.2 732.2,498.7 730.5,497.8 C727.3,496.1 724.6,493.5 721.7,491.4 C718.9,489.4 715.9,487.7 713.4,485.3 C712.5,484.4 711.8,483.1 712.0,481.9 Z" fill="url(#gw)"/>
<path d="M712.0,496.9 C712.2,495.5 713.4,494.3 714.5,493.5 C716.3,492.2 718.5,491.6 720.5,490.6 C722.5,489.7 724.4,488.5 726.5,487.8 C728.1,487.2 729.9,487.0 731.6,486.7 C734.6,486.1 737.7,486.0 740.7,485.2 C742.5,484.7 744.4,483.9 745.8,482.7 C746.8,481.9 746.8,480.3 747.5,479.3 C748.1,478.4 748.9,477.6 749.8,477.0 C751.7,475.8 753.7,474.9 755.7,473.9 C757.9,472.8 760.0,471.5 762.3,470.7 C763.8,470.2 765.4,469.7 766.9,469.9 C769.1,470.1 771.2,470.8 773.1,471.9 C776.0,473.5 778.5,475.9 781.2,477.9 C784.0,480.0 787.0,482.0 789.6,484.4 C790.6,485.3 791.8,486.5 791.6,487.8 C791.4,489.5 790.0,491.0 788.5,491.8 C781.2,495.9 773.3,498.9 765.7,502.3 C757.8,505.9 749.9,509.6 741.8,512.8 C740.0,513.5 738.1,514.2 736.1,514.2 C734.2,514.2 732.2,513.7 730.5,512.8 C727.3,511.1 724.6,508.5 721.7,506.4 C718.9,504.4 715.9,502.7 713.4,500.3 C712.5,499.4 711.8,498.1 712.0,496.9 Z" fill="#67696e" clip-path="url(#pc11)"/>
<path d="M712.0,481.9 C712.2,480.5 713.4,479.3 714.5,478.5 C716.3,477.2 718.5,476.6 720.5,475.6 C722.5,474.7 724.4,473.5 726.5,472.8 C728.1,472.2 729.9,472.0 731.6,471.7 C734.6,471.1 737.7,471.0 740.7,470.2 C742.5,469.7 744.4,468.9 745.8,467.7 C746.8,466.9 746.8,465.3 747.5,464.3 C748.1,463.4 748.9,462.6 749.8,462.0 C751.7,460.8 753.7,459.9 755.7,458.9 C757.9,457.8 760.0,456.5 762.3,455.7 C763.8,455.2 765.4,454.7 766.9,454.9 C769.1,455.1 771.2,455.8 773.1,456.9 C776.0,458.5 778.5,460.9 781.2,462.9 C784.0,465.0 787.0,467.0 789.6,469.4 C790.6,470.3 791.8,471.5 791.6,472.8 C791.4,474.5 790.0,476.0 788.5,476.8 C781.2,480.9 773.3,483.9 765.7,487.3 C757.8,490.9 749.9,494.6 741.8,497.8 C740.0,498.5 738.1,499.2 736.1,499.2 C734.2,499.2 732.2,498.7 730.5,497.8 C727.3,496.1 724.6,493.5 721.7,491.4 C718.9,489.4 715.9,487.7 713.4,485.3 C712.5,484.4 711.8,483.1 712.0,481.9 Z" fill="none" stroke="#5e5e5e" stroke-width="0.8"/>
<ellipse cx="732.4" cy="462.7" rx="7.8" ry="4.7" fill="url(#gw)" stroke="#5e5e5e" stroke-width="0.8"/>
<path d="M870.2,469.6 Q859.7,462.0 871.2,455.9 L888.4,446.8 Q899.9,440.7 910.4,448.3 L960.7,484.8 Q971.2,492.4 959.3,497.7 L939.9,506.4 Q928.0,511.7 917.5,504.1 Z" fill="none" stroke="#6c6c6c" stroke-width="0.8"/>
<path d="M868.6,464.6 L873.0,459.5 L897.0,447.5 L903.5,448.5 L958.5,488.0 L961.5,491.3" fill="none" stroke="#7a7a7a" stroke-width="0.6"/>
<path d="M627.4,583.6 Q616.9,576.0 628.4,569.9 L645.6,560.8 Q657.1,554.7 667.6,562.3 L717.9,598.8 Q728.4,606.4 716.5,611.7 L697.1,620.4 Q685.2,625.7 674.7,618.1 Z" fill="none" stroke="#6c6c6c" stroke-width="0.8"/>
<path d="M625.8,578.6 L630.2,573.5 L654.2,561.5 L660.7,562.5 L715.7,602.0 L718.7,605.3" fill="none" stroke="#7a7a7a" stroke-width="0.6"/>
<path d="M998.7,475.7 Q993.0,471.6 999.1,468.1 L1009.1,462.3 Q1015.2,458.8 1021.0,462.8 L1029.7,468.8 Q1035.5,472.8 1029.4,476.3 L1018.9,482.3 Q1012.8,485.8 1007.1,481.7 Z" fill="#939393"/>
<path d="M998.7,482.7 Q993.0,478.6 999.1,475.1 L1009.1,469.3 Q1015.2,465.8 1021.0,469.8 L1029.7,475.8 Q1035.5,479.8 1029.4,483.3 L1018.9,489.3 Q1012.8,492.8 1007.1,488.7 Z" fill="#a0a0a0" stroke="#777" stroke-width="0.6" clip-path="url(#sq0)"/>
<path d="M998.7,475.7 Q993.0,471.6 999.1,468.1 L1009.1,462.3 Q1015.2,458.8 1021.0,462.8 L1029.7,468.8 Q1035.5,472.8 1029.4,476.3 L1018.9,482.3 Q1012.8,485.8 1007.1,481.7 Z" fill="none" stroke="#5e5e5e" stroke-width="0.8"/>
<path d="M755.9,589.7 Q750.2,585.6 756.3,582.1 L766.3,576.3 Q772.4,572.8 778.2,576.8 L786.9,582.8 Q792.7,586.8 786.6,590.3 L776.1,596.3 Q770.0,599.8 764.3,595.7 Z" fill="#939393"/>
<path d="M755.9,596.7 Q750.2,592.6 756.3,589.1 L766.3,583.3 Q772.4,579.8 778.2,583.8 L786.9,589.8 Q792.7,593.8 786.6,597.3 L776.1,603.3 Q770.0,606.8 764.3,602.7 Z" fill="#a0a0a0" stroke="#777" stroke-width="0.6" clip-path="url(#sq1)"/>
<path d="M755.9,589.7 Q750.2,585.6 756.3,582.1 L766.3,576.3 Q772.4,572.8 778.2,576.8 L786.9,582.8 Q792.7,586.8 786.6,590.3 L776.1,596.3 Q770.0,599.8 764.3,595.7 Z" fill="none" stroke="#5e5e5e" stroke-width="0.8"/>
<ellipse cx="1334.6" cy="549.4" rx="7.3" ry="4.3" fill="#9d9d9d" stroke="#6a6a6a" stroke-width="0.7"/>
<ellipse cx="1354.9" cy="564.7" rx="5.8" ry="3.6" fill="#9d9d9d" stroke="#6a6a6a" stroke-width="0.7"/>
<ellipse cx="1375.4" cy="580.1" rx="7.3" ry="4.4" fill="#9d9d9d" stroke="#6a6a6a" stroke-width="0.7"/>
<ellipse cx="1007.6" cy="702.4" rx="7.3" ry="4.3" fill="#9d9d9d" stroke="#6a6a6a" stroke-width="0.7"/>
<ellipse cx="1027.9" cy="717.7" rx="5.8" ry="3.6" fill="#9d9d9d" stroke="#6a6a6a" stroke-width="0.7"/>
<ellipse cx="1048.4" cy="733.1" rx="7.3" ry="4.4" fill="#9d9d9d" stroke="#6a6a6a" stroke-width="0.7"/>
<polygon points="350.6,493.0 814.5,839.6 807.4,940.1 344.0,593.8" fill="#000" opacity="0.06"/>
<polygon points="814.5,839.6 1516.7,510.6 1509.8,611.2 807.4,940.1" fill="#000" opacity="0.06"/>
<polyline points="350.6,493.0 814.5,839.6 1516.7,510.6" fill="none" stroke="#3c3f46" stroke-width="0.8" opacity="0.45"/>
<polyline points="814.5,839.6 807.4,940.1" fill="none" stroke="#3c3f46" stroke-width="0.8" opacity="0.45"/>
</svg>
<div id="titlebar" class="abs"></div>
<div id="ribbon" class="abs"></div>
<!-- home tab -->
<div class="abs" style="left:184px;top:4px;width:38px;height:26px;background:#bdbdbd;border-radius:4px 4px 0 0"></div>
<!-- doc tab -->
<div class="abs" style="left:226px;top:4px;width:1242px;height:27px;background:#f3f3f3;border-radius:4px 4px 0 0"></div>
<div class="abs" style="left:1472px;top:4px;width:27px;height:26px;background:#bdbdbd;border-radius:4px 4px 0 0"></div>
<div class="abs" style="left:791px;top:11px;font-size:13px;color:#3a3a3a;white-space:nowrap">Test Insert Demo v2*</div>
<!-- manufacture -->
<div class="abs" style="left:8.5px;top:41.5px;width:110px;height:58.5px;border:1px solid #d6d6d6;border-radius:5px"></div>
<div class="abs" style="left:16px;top:63.5px;font-size:11px;font-weight:bold;color:#333;white-space:nowrap">MANUFACTURE</div>
<div class="abs" style="left:107px;top:69px;width:0;height:0;border-left:3px solid transparent;border-right:3px solid transparent;border-top:4px solid #333"></div>
<!-- tabs -->
<div class="tab" style="left:143px;color:#0696d7;font-weight:bold;font-size:11.3px;letter-spacing:-0.25px;-webkit-text-stroke:0">MILLING</div>
<div class="abs" style="left:131px;top:51px;width:69px;height:3px;background:#0696d7"></div>
<div class="tab" style="left:233px">TURNING</div>
<div class="tab" style="left:323.5px">ADDITIVE</div>
<div class="tab" style="left:418.5px">INSPECTION</div>
<div class="tab" style="left:523.5px">FABRICATION</div>
<div class="tab" style="left:638px">UTILITIES</div>
<!-- group labels -->
<div class="lbl" style="left:144px">SETUP<span class="arr"></span></div>
<div class="sep" style="left:212px"></div>
<div class="lbl" style="left:268px">2D<span class="arr"></span></div>
<div class="sep" style="left:348px"></div>
<div class="lbl" style="left:467.5px">3D<span class="arr"></span></div>
<div class="sep" style="left:609px"></div>
<div class="lbl" style="left:627px">DRILLING<span class="arr"></span></div>
<div class="sep" style="left:703px"></div>
<div class="lbl" style="left:718px">MULTI-AXIS<span class="arr"></span></div>
<div class="sep" style="left:803px"></div>
<div class="lbl" style="left:887px">MODIFY<span class="arr"></span></div>
<div class="sep" style="left:1023px"></div>
<div class="lbl" style="left:1063px">ACTIONS<span class="arr"></span></div>
<div class="sep" style="left:1159px"></div>
<div class="lbl" style="left:1240px">MANAGE<span class="arr"></span></div>
<div class="sep" style="left:1378px"></div>
<div class="lbl" style="left:1393px">INSPECT<span class="arr"></span></div>
<div class="sep" style="left:1455px"></div>
<div class="lbl" style="left:1470px">SELECT<span class="arr"></span></div>
<div class="sep" style="left:1527px"></div>
<div class="abs" style="left:1555px;top:54px;width:37px;height:37px;background:#0696d7"></div>
<div class="abs" style="left:1531px;top:92px;width:84px;height:16.5px;background:#0696d7"></div>
<div class="lbl" style="left:1542px;color:#fff">TOOLPATH<span class="arr" style="border-top-color:#fff"></span></div>
<svg class="abs" style="left:0;top:0" width="1675" height="113"><rect x="6.0" y="9.0" width="3.4" height="3.4" fill="#5f5f5f"/><rect x="6.0" y="13.6" width="3.4" height="3.4" fill="#5f5f5f"/><rect x="6.0" y="18.2" width="3.4" height="3.4" fill="#5f5f5f"/><rect x="10.6" y="9.0" width="3.4" height="3.4" fill="#5f5f5f"/><rect x="10.6" y="13.6" width="3.4" height="3.4" fill="#5f5f5f"/><rect x="10.6" y="18.2" width="3.4" height="3.4" fill="#5f5f5f"/><rect x="15.2" y="9.0" width="3.4" height="3.4" fill="#5f5f5f"/><rect x="15.2" y="13.6" width="3.4" height="3.4" fill="#5f5f5f"/><rect x="15.2" y="18.2" width="3.4" height="3.4" fill="#5f5f5f"/><path d="M38,8 h9 l4,4 v11 h-13 z" fill="#5f5f5f"/><path d="M47,8 v4 h4" fill="#c9c9c9"/><path d="M57,13 h6 l-3,4 z" fill="#5f5f5f"/><path d="M82,9 h11 l2,2 v11 h-13 z" fill="#5f5f5f"/><rect x="84.5" y="9" width="7" height="4.5" fill="#c9c9c9"/><rect x="85" y="17" width="6" height="5" fill="#c9c9c9"/><rect x="87" y="18.5" width="2" height="3.5" fill="#5f5f5f"/><path d="M117,15 h5 a4.5,4.5 0 0 1 4.5,4.5 v1.5" fill="none" stroke="#5f5f5f" stroke-width="1.8"/><path d="M114.5,15 l4.5,-4.5 v9 z" fill="#5f5f5f"/><path d="M133,13 h7 l-3.5,4 z" fill="#5f5f5f"/><path d="M160,15 h-5 a4.5,4.5 0 0 0 -4.5,4.5 v1.5" fill="none" stroke="#8e8e8e" stroke-width="1.8"/><path d="M162.5,15 l-4.5,-4.5 v9 z" fill="#8e8e8e"/><path d="M171,13 h7 l-3.5,4 z" fill="#9a9a9a"/><path d="M198,19 l6.5,-6 l6.5,6 h-2 v6 h-3 v-3.5 h-3 v3.5 h-3 v-6 z" fill="#7a7a7a"/><rect x="207.5" y="13" width="1.8" height="3" fill="#7a7a7a"/><path d="M780,10.7 l7,3.5 v8 l-7,3.8 l-7,-3.8 v-8 z" fill="#f7931e"/><path d="M780,10.7 l7,3.5 l-7,3.8 l-7,-3.8 z" fill="#fcc89b"/><path d="M780,18 l7,-3.8 v8 l-7,3.8 z" fill="#f15a24"/><rect x="1450.5" y="3.5" width="14.5" height="18.5" fill="#f4f4f4" stroke="#c4c4c4" stroke-width="1"/><path d="M1453.5,13.5 l8,8 M1461.5,13.5 l-8,8" stroke="#555" stroke-width="1"/><path d="M1480.5,17.5 h12 M1486.5,11.5 v12" stroke="#6a6a6a" stroke-width="2.6"/><circle cx="1518.5" cy="15.5" r="6.5" fill="none" stroke="#5f5f5f" stroke-width="2.2" stroke-dasharray="30 6" transform="rotate(120 1518.5 15.5)"/><g transform="translate(1519,15) rotate(45)" fill="#5f5f5f"><rect x="-3" y="-1.5" width="6" height="4.5" rx="1"/><rect x="-2" y="-5" width="1.2" height="3.8"/><rect x="0.8" y="-5" width="1.2" height="3.8"/></g><circle cx="1550.5" cy="15.5" r="7.5" fill="none" stroke="#5f5f5f" stroke-width="1"/><circle cx="1550.5" cy="15.5" r="6" fill="#5f5f5f"/><path d="M1550.5,11 v5 h3.5" fill="none" stroke="#c9c9c9" stroke-width="1.3"/><path d="M1576,22 h12 l-1.5,-2 v-5 a4.5,4.5 0 0 0 -9,0 v5 z" fill="#5f5f5f"/><rect x="1580.5" y="22.5" width="3" height="1.8" rx="0.9" fill="#5f5f5f"/><circle cx="1586.5" cy="11.5" r="2.8" fill="#0696d7"/><circle cx="1614.5" cy="15.5" r="7.8" fill="#5f5f5f"/><text x="1614.5" y="20.2" font-family="Liberation Sans" font-weight="bold" font-size="12" fill="#fff" text-anchor="middle">?</text><defs><clipPath id="av"><circle cx="1652.5" cy="15.5" r="11.5"/></clipPath></defs><circle cx="1652.5" cy="15.5" r="11.5" fill="#9fb3c8"/><g clip-path="url(#av)"><circle cx="1652.5" cy="11.5" r="5.2" fill="#4a5f78"/><ellipse cx="1652.5" cy="26" rx="9" ry="7.5" fill="#4a5f78"/></g><path d="M130.5,60.5 h8 l2,2.5" fill="#c8c8c8" stroke="#7a7a7a" stroke-width="1"/><path d="M130.5,60.5 h9 l2,2.5 h-11 z" fill="#c8c8c8"/><path d="M130.5,60.5 v21 h19 M130.5,63 h26 v13" fill="none" stroke="#7a7a7a" stroke-width="1.1"/><path d="M153.5,71.5 l7.5,4 v7.5 l-7.5,4 l-7.5,-4 v-7.5 z" fill="#3a9ee0"/><path d="M153.5,71.5 l7.5,4 l-7.5,4 l-7.5,-4 z" fill="#e8f2fa" stroke="#8ab" stroke-width="0.5"/><path d="M153.5,79.5 l7.5,-4 v7.5 l-7.5,4 z" fill="#2a85c4"/><rect x="174.5" y="57.5" width="25" height="30" fill="#f8f8f8" stroke="#6a6a6a" stroke-width="1.1"/><text x="187" y="72" font-family="Liberation Sans" font-weight="bold" font-size="12" fill="#0696d7" text-anchor="middle">G</text><rect x="178.5" y="76.5" width="2" height="2" fill="#555"/><rect x="182" y="77.2" width="14" height="0.9" fill="#777"/><rect x="178.5" y="81.5" width="2" height="2" fill="#555"/><rect x="182" y="82.2" width="14" height="0.9" fill="#777"/><path d="M224.3,70.5 l15.1,10.8 v4.8 l-15.1,-10.6 z" fill="#e8e8e8" stroke="#5e5e5e" stroke-width="0.8"/><path d="M239.4,81.3 l15.6,-11.2 v4.4 l-15.6,11.6 z" fill="#d4d4d4" stroke="#5e5e5e" stroke-width="0.8"/><path d="M224.5,69.6 l14.9,-11.3 l15.6,11.3 l-15.6,11.2 z" fill="#4db0ea"/><path d="M225.2,72.6 L243.3,60 A3,3 0 0 1 248.3,63.5 L228.8,77.6 A2.8,2.8 0 0 0 232,82 L252.8,67.4" fill="none" stroke="#135a8c" stroke-width="1.3"/><path d="M266.2,70.6 l15.2,-12.8 l15.5,12.8 v6.2 l-15.5,10.9 l-15.2,-10.9 z" fill="#f6f6f6" stroke="#666" stroke-width="1.1"/><path d="M269,73 l12.4,-8.5 l12.6,8.5 v2 l-12.6,8.6 l-12.4,-8.6 z" fill="#dcdcdc"/><path d="M270.9,75.3 l10.5,-6.6 l11.2,6.6 l-11.2,8.1 z" fill="#4aa8e6"/><path d="M274,76 q4,-4 7,-2 t7,-1 M275,77.5 q4,3 7,1 t7,-2" fill="none" stroke="#17598a" stroke-width="1.1"/><path d="M308.2,73.4 l15.1,-10.9 l15.1,10.9 l-15.1,12.4 z" fill="none" stroke="#1a9ae0" stroke-width="1.3"/><path d="M313.2,68.3 l10.1,7.4 v6.2 l-10.1,-7.4 z" fill="#4aaae8"/><path d="M323.3,75.7 l10.5,-7.4 v6.2 l-10.5,7.4 z" fill="#2d90d5"/><path d="M313.2,68.3 l10.1,-8.9 l10.5,8.9 l-10.5,7.4 z" fill="#fff" stroke="#555" stroke-width="0.9"/><path d="M361.3,66.2 l7.9,-7.9 h20.9 v21.3 l-7.5,7.5 h-21.3 z" fill="#e2e2e2" stroke="#666" stroke-width="1.1"/><rect x="368" y="62" width="18.3" height="18.4" fill="#4aa8e6"/><path d="M367,73 l8,-4 h11 M367,79 l8,-4 h11 M368,70 l6,-2 M368,76 l6,-2" fill="none" stroke="#17598a" stroke-width="1"/><path d="M402,79 l17,-12 l14,8 v2.5 l-17,9 l-14,-5 z" fill="#e8e8e8" stroke="#c8c8c8" stroke-width="0.8"/><path d="M402,77 l17,-12 l14,8 l-17,11 z" fill="#bcdcf2"/><path d="M408,77 l10,-7 l8,5 l-10,7 z" fill="none" stroke="#8ab8dc" stroke-width="0.8"/><circle cx="425.5" cy="64.7" r="7.9" fill="#0696d7"/><g transform="translate(424.8,65.3) rotate(45)" fill="#fff"><rect x="-4.4" y="-3" width="8.8" height="7.4" rx="2.2"/><rect x="-2.6" y="-6.6" width="1.5" height="4"/><rect x="1.1" y="-6.6" width="1.5" height="4"/><rect x="-1.2" y="3.5" width="2.4" height="5.2"/></g><path d="M450,64 h23.5 v9 l-7,7 h-16.5 z" fill="#e0e0e0" stroke="#666" stroke-width="1"/><path d="M443.5,77 h18 v9.5 h-18 z" fill="#e0e0e0" stroke="#666" stroke-width="1"/><path d="M461.5,86.5 l12,-11 v-2.5" fill="#cfcfcf" stroke="#666" stroke-width="1"/><path d="M451,61 h23 M449,63.5 h20 M446.5,74.5 h17 M443.5,77 h16" stroke="#17598a" stroke-width="1.5"/><path d="M486.3,84.8 v-20 l7.9,-7.6 h22.4 v20.2 l-8.2,8.2 z" fill="#e2e2e2" stroke="#666" stroke-width="1.1"/><path d="M486.8,63.2 h21.5 v14.2 h-21.5 z" fill="#4aa8e6"/><path d="M508.3,77.4 l8,-8 v-3 q-5,0 -8,6 z" fill="#cfcfcf"/><path d="M486.5,84 q6,-3 7,-10 t4,-15 q3,0 1,10 t-1,16 q2,1 3,-8 t4,-12 q3,-4 8,-5" fill="none" stroke="#17598a" stroke-width="1"/><path d="M528.5,75.9 q0,-15.3 14.5,-15.3 q15,0 15,15.3 q-3,7.4 -15,7.4 q-12,0 -14.5,-7.4 z" fill="#fff" stroke="#666" stroke-width="1"/><path d="M529,75.5 q0,-14.9 14,-14.9 q14.5,0 14.5,14.9 q-4,2.5 -14.5,2.5 q-10,0 -14,-2.5 z" fill="#4aa8e6"/><path d="M535,68 q8,-9 16,0 q-8,3 -16,0 z M539,67 q4,-4 8,0 q-4,1 -8,0 z" fill="none" stroke="#17598a" stroke-width="1.2"/><path d="M570.5,80 h20 l9,-6 v5.5 l-9,6.5 h-20 z" fill="#e2e2e2" stroke="#666" stroke-width="1"/><path d="M570.5,80 q2,-10 4,-16 t2,-6 h3.5 q1,12 6,14 l13.5,2 l-9,6 z" fill="#4aa8e6"/><path d="M576.5,58.5 l1.5,-1.5 h2.5 l-1,2 z" fill="#fff" stroke="#666" stroke-width="0.7"/><path d="M572,65.5 q6,0 10,-3 M571.5,71 q10,0 16,-4.5 M571,76 q14,0 21.5,-6" fill="none" stroke="#17598a" stroke-width="1.2"/><path d="M621,74.1 l10,-8.8 h21.6 v4.5 l-10.6,10.4 h-21 z" fill="#e8e8e8" stroke="#666" stroke-width="1"/><rect x="632.1" y="57.5" width="10.5" height="29.9" rx="5" fill="#8a8a8a"/><path d="M633,62 l9,-3 M633,67 l9,-3 M633,80 l9,-3 M633,85 l9,-3" stroke="#555" stroke-width="1.2"/><ellipse cx="637.3" cy="59" rx="4.5" ry="1.6" fill="#eee"/><rect x="632.1" y="69" width="10.5" height="11.2" fill="#f4f4f4"/><path d="M632.6,69 v11.2 M642.1,69 v11.2" stroke="#1a9ae0" stroke-width="1.1"/><path d="M666,62 h6 M669,59 v6" stroke="#f08a8a" stroke-width="1.3"/><path d="M664,78 l10,-8 h18 v4 l-10,8 h-18 z" fill="#ececec" stroke="#c4c4c4" stroke-width="0.8"/><path d="M674,61 h7 v26 l-3,2 l-4,-2 z" fill="#e4e4e4" stroke="#c4c4c4" stroke-width="0.8"/><circle cx="686.6" cy="65.10000000000001" r="7.9" fill="#0696d7"/><g transform="translate(685.9,65.7) rotate(45)" fill="#fff"><rect x="-4.4" y="-3" width="8.8" height="7.4" rx="2.2"/><rect x="-2.6" y="-6.6" width="1.5" height="4"/><rect x="1.1" y="-6.6" width="1.5" height="4"/><rect x="-1.2" y="3.5" width="2.4" height="5.2"/></g><path d="M718,68 h10 v12 h-10 z" fill="#c6e2f5"/><path d="M726,79 l6,-14 h8 l-3,16 q-5,4 -11,-2 z" fill="#dcdcdc" stroke="#c4c4c4" stroke-width="0.8"/><path d="M732,84 l4,-10 h12 l-5,15 z" fill="#bcdcf2"/><circle cx="741.8" cy="65.10000000000001" r="7.9" fill="#0696d7"/><g transform="translate(741.0999999999999,65.7) rotate(45)" fill="#fff"><rect x="-4.4" y="-3" width="8.8" height="7.4" rx="2.2"/><rect x="-2.6" y="-6.6" width="1.5" height="4"/><rect x="1.1" y="-6.6" width="1.5" height="4"/><rect x="-1.2" y="3.5" width="2.4" height="5.2"/></g><path d="M761,72 q0,-8 10,-9 h6 v14 q-8,6 -14,2 z" fill="#e6e6e6" stroke="#c8c8c8" stroke-width="0.8"/><path d="M768,76 l8,-7 l12,8 l-8,9 z" fill="#c6e2f5"/><ellipse cx="773" cy="77" rx="3" ry="4" fill="none" stroke="#9cc" stroke-width="0.8"/><circle cx="782.4" cy="65.7" r="7.9" fill="#0696d7"/><g transform="translate(781.6999999999999,66.3) rotate(45)" fill="#fff"><rect x="-4.4" y="-3" width="8.8" height="7.4" rx="2.2"/><rect x="-2.6" y="-6.6" width="1.5" height="4"/><rect x="1.1" y="-6.6" width="1.5" height="4"/><rect x="-1.2" y="3.5" width="2.4" height="5.2"/></g><path d="M817,59.5 h18 M817,67 q-4,4 0,7 h17" fill="none" stroke="#a8d0ee" stroke-width="1"/><path d="M824,64 l10,12" stroke="#9a9a9a" stroke-width="2.2"/><circle cx="830" cy="84" r="2.8" fill="none" stroke="#9a9a9a" stroke-width="1.6"/><circle cx="838" cy="82" r="2.8" fill="none" stroke="#9a9a9a" stroke-width="1.6"/><path d="M834,74 l-3,7 M834,74 l3,5" stroke="#9a9a9a" stroke-width="1.6"/><circle cx="839.1" cy="65.60000000000001" r="7.9" fill="#0696d7"/><g transform="translate(838.4,66.2) rotate(45)" fill="#fff"><rect x="-4.4" y="-3" width="8.8" height="7.4" rx="2.2"/><rect x="-2.6" y="-6.6" width="1.5" height="4"/><rect x="1.1" y="-6.6" width="1.5" height="4"/><rect x="-1.2" y="3.5" width="2.4" height="5.2"/></g><path d="M859,76 l15,10 M868,59 l8,6 M866,66 q-6,1 -3,6 l11,8" fill="none" stroke="#a8d0ee" stroke-width="1"/><path d="M876,76 l9,9 M885,76 l-9,9" stroke="#f0a0a0" stroke-width="2.2"/><circle cx="880.8" cy="65.60000000000001" r="7.9" fill="#0696d7"/><g transform="translate(880.0999999999999,66.2) rotate(45)" fill="#fff"><rect x="-4.4" y="-3" width="8.8" height="7.4" rx="2.2"/><rect x="-2.6" y="-6.6" width="1.5" height="4"/><rect x="1.1" y="-6.6" width="1.5" height="4"/><rect x="-1.2" y="3.5" width="2.4" height="5.2"/></g><path d="M899,71 v-12 h14" fill="none" stroke="#e0c890" stroke-width="1"/><path d="M899,71 h10" stroke="#9ed89e" stroke-width="1"/><path d="M899,75 h7 v-10 h6 M899,75 v8 h25 v-3" fill="none" stroke="#c4c4c4" stroke-width="1.2"/><path d="M914,84 l8,-8 l3,3 l-8,8 z" fill="#f6c880"/><path d="M914,84 l-1,3 l3,-1 z" fill="#999"/><circle cx="921" cy="65.9" r="7.9" fill="#0696d7"/><g transform="translate(920.3,66.5) rotate(45)" fill="#fff"><rect x="-4.4" y="-3" width="8.8" height="7.4" rx="2.2"/><rect x="-2.6" y="-6.6" width="1.5" height="4"/><rect x="1.1" y="-6.6" width="1.5" height="4"/><rect x="-1.2" y="3.5" width="2.4" height="5.2"/></g><path d="M941,59 h7 v7 h-7 z" fill="#e0e0e0" stroke="#ccc" stroke-width="0.6"/><path d="M942.5,66 h4 v8 l-2,2 l-2,-2 z" fill="#c8c8c8"/><path d="M961,74 h5 v10 l-2.5,2 l-2.5,-2 z" fill="#c8c8c8"/><path d="M950,82 h10 M950,82 l2,-1.5 M950,82 l2,1.5 M960,82 l-2,-1.5 M960,82 l-2,1.5" stroke="#a8d0ee" stroke-width="0.9" fill="none"/><circle cx="964.2" cy="65.60000000000001" r="7.9" fill="#0696d7"/><g transform="translate(963.5,66.2) rotate(45)" fill="#fff"><rect x="-4.4" y="-3" width="8.8" height="7.4" rx="2.2"/><rect x="-2.6" y="-6.6" width="1.5" height="4"/><rect x="1.1" y="-6.6" width="1.5" height="4"/><rect x="-1.2" y="3.5" width="2.4" height="5.2"/></g><circle cx="990" cy="64" r="4" fill="none" stroke="#bdbdbd" stroke-width="1.5"/><path d="M983,64 h3 M994,64 h3 M990,57 v3 M990,68 v3" stroke="#bdbdbd" stroke-width="1.3"/><path d="M996,71 l6,6" stroke="#a8d0ee" stroke-width="1.5"/><circle cx="1006" cy="82" r="4" fill="none" stroke="#a8d0ee" stroke-width="1.5"/><path d="M999,82 h3 M1010,82 h3 M1006,75 v3 M1006,86 v3" stroke="#a8d0ee" stroke-width="1.3"/><circle cx="1006.2" cy="65.60000000000001" r="7.9" fill="#0696d7"/><g transform="translate(1005.5,66.2) rotate(45)" fill="#fff"><rect x="-4.4" y="-3" width="8.8" height="7.4" rx="2.2"/><rect x="-2.6" y="-6.6" width="1.5" height="4"/><rect x="1.1" y="-6.6" width="1.5" height="4"/><rect x="-1.2" y="3.5" width="2.4" height="5.2"/></g><path d="M1037.5,73 l13,-13 l13,13 l-13,13 z" fill="none" stroke="#1a9ae0" stroke-width="1.3"/><path d="M1044,73 l6.5,-6.5 l6.5,6.5 l-6.5,6.5 z" fill="none" stroke="#1a9ae0" stroke-width="1"/><rect x="1050" y="57.5" width="5.5" height="3.5" fill="#999" stroke="#666" stroke-width="0.6"/><rect x="1051" y="61" width="3.5" height="12" fill="#9a9a9a" stroke="#666" stroke-width="0.6"/><rect x="1049" y="75" width="17.5" height="12.5" rx="2" fill="#e2e2e2" stroke="#888" stroke-width="0.8"/><rect x="1052" y="78" width="7" height="6" fill="#4aa8e6"/><rect x="1049" y="86" width="17.5" height="2" fill="#1a5f8e"/><rect x="1079.3" y="57.5" width="25.5" height="30.5" fill="#f8f8f8" stroke="#666" stroke-width="1.1"/><text x="1092" y="71" font-family="Liberation Sans" font-weight="bold" font-size="11.5" fill="#0696d7" text-anchor="middle">G1</text><text x="1092" y="83.5" font-family="Liberation Sans" font-weight="bold" font-size="11.5" fill="#0696d7" text-anchor="middle">G2</text><rect x="1122.8" y="58.5" width="23" height="28.5" fill="#f8f8f8" stroke="#666" stroke-width="1.1"/><rect x="1127.5" y="62.5" width="13.5" height="4.5" fill="none" stroke="#666" stroke-width="1"/><path d="M1127,72.5 h14.5 M1127,77 h14.5 M1127,81.5 h14.5" stroke="#777" stroke-width="1"/><rect x="1171.5" y="57.5" width="8" height="6" fill="#d4d4d4" stroke="#888" stroke-width="0.8"/><path d="M1175.5,63.5 v14" stroke="#888" stroke-width="1.3"/><circle cx="1175.5" cy="78.5" r="2" fill="#e53935"/><rect x="1183" y="61" width="6" height="24" fill="#bdbdbd" stroke="#999" stroke-width="0.6"/><path d="M1180,81 l6,-2 l2,5 l-6,2 z" fill="#f7a21b"/><rect x="1191" y="65" width="11" height="7" fill="#d4d4d4" stroke="#888" stroke-width="0.8"/><rect x="1193.5" y="72" width="6" height="15" rx="1" fill="#9a9a9a" stroke="#777" stroke-width="0.7"/><path d="M1194,76 l5,-2 M1194,80 l5,-2 M1194,84 l5,-2" stroke="#666" stroke-width="0.8"/><defs><clipPath id="cs"><circle cx="1228.2" cy="72.5" r="15.3"/></clipPath><pattern id="chk" width="10" height="10" patternUnits="userSpaceOnUse" x="1223" y="67"><rect width="10" height="10" fill="#fff"/><rect width="5" height="5" fill="#555"/><rect x="5" y="5" width="5" height="5" fill="#555"/></pattern></defs><circle cx="1228.2" cy="72.5" r="15.3" fill="url(#chk)" stroke="#555" stroke-width="1.2"/><rect x="1255" y="61.5" width="30.5" height="22" rx="4" fill="#dedede" stroke="#888" stroke-width="0.9"/><rect x="1259" y="64" width="12" height="15" fill="#4aa8e6" stroke="#777" stroke-width="0.6"/><rect x="1262" y="67" width="6" height="4" fill="#cfe6f7"/><rect x="1274" y="66" width="7.5" height="11" fill="#f0f0f0" stroke="#888" stroke-width="0.6"/><circle cx="1277" cy="72" r="1" fill="#e53935"/><rect x="1255" y="80.5" width="30.5" height="3.5" fill="#1a5f8e"/><path d="M1298.5,57.5 h13 l6,6 v22 h-19 z" fill="#f8f8f8" stroke="#666" stroke-width="0.9"/><path d="M1301.5,60.5 h13 l6,6 v22 h-19 z" fill="#f8f8f8" stroke="#666" stroke-width="0.9"/><path d="M1304.5,63.5 h13 l6,6 v22 h-19 z" fill="#f8f8f8" stroke="#666" stroke-width="0.9"/><text x="1313.5" y="83" font-family="Liberation Sans" font-weight="bold" font-size="10.5" fill="#0696d7" text-anchor="middle">G</text><path d="M1340.5,57.5 h13 l6,6 v22 h-19 z" fill="#f8f8f8" stroke="#666" stroke-width="0.9"/><path d="M1343.5,60.5 h13 l6,6 v22 h-19 z" fill="#f8f8f8" stroke="#666" stroke-width="0.9"/><path d="M1346.5,63.5 h13 l6,6 v22 h-19 z" fill="#f8f8f8" stroke="#666" stroke-width="0.9"/><path d="M1349,80 l9,-6 a2,2 0 0 1 2,3.5 l-9,6 a2,2 0 0 0 2,3.5 l9,-6" fill="none" stroke="#0696d7" stroke-width="1.3"/><path d="M1403.5,66 v8 M1431,66 v8 M1404,70 h26.5" stroke="#444" stroke-width="1"/><path d="M1404,70 l3,-2 v4 z M1430.5,70 l-3,-2 v4 z" fill="#444"/><rect x="1403" y="75" width="28.5" height="6" fill="#f7a21b"/><path d="M1406,75 v2 M1409,75 v2 M1412,75 v2 M1415,75 v2 M1418,75 v2 M1421,75 v2 M1424,75 v2 M1427,75 v2" stroke="#a0660a" stroke-width="0.6"/><rect x="1477.5" y="57.8" width="26.5" height="20.8" fill="none" stroke="#1cc45a" stroke-width="1.3" stroke-dasharray="3 2"/><path d="M1497.5,71.5 v13 l3,-3 l2.5,5 l2,-1 l-2.5,-5 h4 z" fill="#fff" stroke="#333" stroke-width="0.9"/><rect x="1559.5" y="57.8" width="29.5" height="30.2" rx="3.5" fill="#3dba72"/><path d="M1562.5,68 v-7 h7 M1579,61 h7 v7 M1586,77 v8 h-8 M1569,85 h-6.5 v-8" fill="none" stroke="#fff" stroke-width="2"/><rect x="1568" y="69" width="3" height="9" fill="#fff"/><rect x="1573" y="64" width="3" height="14" fill="#fff"/><rect x="1578" y="64" width="3" height="9" fill="#fff"/><rect x="1565" y="73" width="2.5" height="6" fill="#fff" opacity="0.8"/></svg>
<!-- browser -->
<div class="abs" style="left:1px;top:117px;width:561px;height:25px;background:#f3f3f3;box-shadow:0 1px 1px rgba(0,0,0,.35)"></div>
<div class="abs" style="left:25.5px;top:123.5px;font-size:10.2px;letter-spacing:-0.35px;color:#666;white-space:nowrap">BROWSER</div>
<div class="row" style="left:36px;top:146.6px;width:170px"><span class="rt" style="left:56px">Test Insert Demo v1</span></div>
<div class="row" style="left:53.3px;top:170px;width:84px"><span class="rt" style="left:32px">Units: in</span></div>
<div class="row" style="left:53.3px;top:193.2px;width:111px"><span class="rt" style="left:32px">Named Views</span></div>
<div class="row" style="left:53.3px;top:216.5px;width:100px"><span class="rt" style="left:57px">Origin</span></div>
<div class="row" style="left:53.3px;top:240px;width:104px"><span class="rt" style="left:57px">Models</span></div>
<div class="row" style="left:53.5px;top:263.1px;width:96px"><span class="rt" style="left:52px">Setups</span></div>
<div class="row" style="left:71px;top:286.5px;width:152px"><div class="abs" style="left:69px;top:2px;width:59px;height:15px;background:#8c8c8c"></div><span class="rt" style="left:76.5px;color:#fff;font-weight:bold;font-size:11.3px">Setup 2</span></div>
<div class="row" style="left:71px;top:310.2px;width:148px"><span class="rt" style="left:76px">Setup 1</span></div>
<div class="row" style="left:71px;top:333.1px;width:148px"><span class="rt" style="left:76px">Setup 4</span></div>
<!-- dropdown menu -->
<div class="abs" style="left:1477px;top:109px;width:196.5px;height:128px;background:#fff;box-shadow:0 0 0 1px #a9a9a9,0 1px 3px rgba(0,0,0,.3)">
 <div class="mi" style="top:5.5px">Send to Toolpath</div>
 <div class="mi" style="top:26px">Import Workholding Files</div>
 <div class="mi" style="top:46.5px">Import Program</div>
 <div class="abs" style="left:5px;top:63px;width:187px;height:1px;background:#8a8a8a"></div>
 <div class="mi" style="top:67.5px">Update Add-in</div>
 <div class="mi" style="top:88px">Get Support</div>
 <div class="mi" style="top:108.5px">About</div>
</div>
<!-- dialog -->
<div class="abs" style="left:1417px;top:243px;width:243px;height:208.5px;background:#f1f1f1;box-shadow:0 0 0 1px #c8c8c8,0 0 3px 1px rgba(0,0,0,.35)">
 <div class="abs" style="left:0;top:0;width:241px;height:23px;background:linear-gradient(#fbfbfb,#ececec);border-bottom:1px solid #d4d4d4"></div>
 <div class="abs" style="left:5.5px;top:7px;width:8.5px;height:8.5px;border-radius:50%;background:#333"><div class="abs" style="left:1px;top:3.5px;width:6.5px;height:1.2px;background:#ccc"></div></div>
 <div class="abs" style="left:23.5px;top:5.5px;font-size:10.7px;color:#666;white-space:nowrap">SEND TO TOOLPATH</div>
 <div class="abs" style="left:0;top:25px;width:40px;height:25px;border:1px solid #d4d4d4;border-bottom:none;background:#f4f4f4"></div>
 <div class="abs" style="left:39.5px;top:49.5px;width:202px;height:1px;background:#d4d4d4"></div>
 <div class="abs" style="left:7.5px;top:31px;font-size:11.5px;color:#333">Main</div>
 <div class="abs" style="left:12px;top:61px;font-size:11.5px;color:#333">Setups</div>
 <div class="abs" style="left:64px;top:53.5px;width:146px;height:27px;background:#fff;border:1px solid #d2d2d2"></div>
 <div class="abs" style="left:71.5px;top:61px;font-size:11.5px;color:#333;white-space:nowrap">Use Existing Setups</div>
 <div class="abs" style="left:200px;top:65px;width:0;height:0;border-left:3px solid transparent;border-right:3px solid transparent;border-top:4px solid #222"></div>
 <div class="abs" style="left:12px;top:90.5px;font-size:11.5px;color:#333">Setup 2</div>
 <div class="abs" style="left:12px;top:120.5px;font-size:11.5px;color:#333">Setup 1</div>
 <div class="abs" style="left:12px;top:150.5px;font-size:11.5px;color:#333">Setup 4</div>
 <div class="abs" style="left:0;top:173.5px;width:241px;height:1px;background:#d8d8d8"></div>
 <div class="abs" style="left:97px;top:182px;width:58px;height:19.5px;background:#e8e8e8;border:1px solid #c9c9c9;font-size:11.5px;color:#333;text-align:center;line-height:18.5px">OK</div>
 <div class="abs" style="left:172.5px;top:182px;width:58px;height:19.5px;background:#e8e8e8;border:1px solid #c9c9c9;font-size:11.5px;color:#333;text-align:center;line-height:18.5px">Cancel</div>
</div>
<svg class="abs" style="left:0;top:0;pointer-events:none" width="1675" height="967"><defs><linearGradient id="cg" x1="0" y1="0" x2="0" y2="1"><stop offset="0" stop-color="#f4f6f8"/><stop offset="1" stop-color="#b8c4d0"/></linearGradient><radialGradient id="rg" cx="0.5" cy="0.3" r="0.7"><stop offset="0" stop-color="#fafafa"/><stop offset="1" stop-color="#a9b2bd"/></radialGradient><linearGradient id="dg" x1="0" y1="0" x2="0" y2="1"><stop offset="0" stop-color="#f8f8f8"/><stop offset="1" stop-color="#c4d2de"/></linearGradient><linearGradient id="cbg" x1="0" y1="0" x2="0" y2="1"><stop offset="0" stop-color="#f2f2f2"/><stop offset="1" stop-color="#b8b8b8"/></linearGradient></defs><path d="M6,129.5 l4.5,-3.2 v6.4 z M10.5,129.5 l4.5,-3.2 v6.4 z" fill="#2a3440"/><circle cx="545.5" cy="129.5" r="4.2" fill="#333"/><rect x="542.5" y="129" width="6" height="1.2" fill="#ccc"/><path d="M26.5,152.5 v8 h-8 z" fill="#2a2f36" stroke="#1a1f26" stroke-width="1"/><path d="M25.0,155 v4 h-4 z" fill="#777"/><path d="M39,156.5 q7.5,-8.5 15,0 q-7.5,8.5 -15,0 z" fill="#9a9a9a"/><circle cx="46.5" cy="156.5" r="3" fill="#f1f1f1"/><circle cx="46.5" cy="156.5" r="1.6" fill="#9a9a9a"/><path d="M64.5,150.5 q0,-1 1,-1 h6 q1,0 1,1 v13 h-8 z" fill="url(#cg)" stroke="#8a8a8a" stroke-width="0.8"/><path d="M72.5,156 h5 q1,0 1,1 v6.5 h-6 z" fill="url(#cg)" stroke="#8a8a8a" stroke-width="0.8"/><path d="M57.5,172.5 h9 l4,4 v9 h-13 z" fill="url(#dg)" stroke="#8a8a8a" stroke-width="0.8"/><rect x="57" y="183.8" width="14" height="2.6" rx="1" fill="#f5a300"/><path d="M36.5,198.5 l6,4.5 l-6,4.5 z" fill="#8a8f96" stroke="#222a33" stroke-width="1"/><rect x="56.4" y="197" width="6.5" height="1.6" fill="#9a9a9a"/><rect x="56.4" y="198.9" width="15.5" height="10.1" fill="#9a9a9a"/><path d="M36.5,221.8 l6,4.5 l-6,4.5 z" fill="#8a8f96" stroke="#222a33" stroke-width="1"/><path d="M57,226.3 q7.5,-8 15,0 q-7.5,8 -15,0 z" fill="none" stroke="#a0a0a0" stroke-width="1"/><circle cx="64.5" cy="226.3" r="2.5" fill="none" stroke="#a0a0a0" stroke-width="1"/><path d="M60,221.3 l9,10" stroke="#a0a0a0" stroke-width="1"/><rect x="80.8" y="220.2" width="6.5" height="1.6" fill="#9a9a9a"/><rect x="80.8" y="222.1" width="15.5" height="10.1" fill="#9a9a9a"/><path d="M36.5,245.1 l6,4.5 l-6,4.5 z" fill="#8a8f96" stroke="#222a33" stroke-width="1"/><path d="M57,249.6 q7.5,-8.5 15,0 q-7.5,8.5 -15,0 z" fill="#9a9a9a"/><circle cx="64.5" cy="249.6" r="3" fill="#f1f1f1"/><circle cx="64.5" cy="249.6" r="1.6" fill="#9a9a9a"/><path d="M81.5,244.0 q0,-1 1,-1 h6 q1,0 1,1 v13 h-8 z" fill="url(#cg)" stroke="#8a8a8a" stroke-width="0.8"/><path d="M89.5,249.5 h5 q1,0 1,1 v6.5 h-6 z" fill="url(#cg)" stroke="#8a8a8a" stroke-width="0.8"/><path d="M44,268.5 v8 h-8 z" fill="#2a2f36" stroke="#1a1f26" stroke-width="1"/><path d="M42.5,271 v4 h-4 z" fill="#777"/><path d="M57,272.8 q7.5,-8.5 15,0 q-7.5,8.5 -15,0 z" fill="#9a9a9a"/><circle cx="64.5" cy="272.8" r="3" fill="#f1f1f1"/><circle cx="64.5" cy="272.8" r="1.6" fill="#9a9a9a"/><path d="M80.5,266.5 h4.5 l1,1.5 h6 v5 M80.5,268.0 v9 h7" fill="none" stroke="#777" stroke-width="1"/><path d="M80.5,266.5 h4.5 l1,1.5 h-5.5 z" fill="#c4c4c4"/><path d="M90.5,272.5 l4,2.3 v3.5 l-4,2.3 l-4,-2.3 v-3.5 z" fill="#1e8fd8"/><path d="M90.5,272.5 l4,2.3 l-4,2.3 l-4,-2.3 z" fill="#fff" stroke="#1e8fd8" stroke-width="0.5"/><path d="M74,295.8 q7.5,-8.5 15,0 q-7.5,8.5 -15,0 z" fill="#9a9a9a"/><circle cx="81.5" cy="295.8" r="3" fill="#f1f1f1"/><circle cx="81.5" cy="295.8" r="1.6" fill="#9a9a9a"/><circle cx="105.9" cy="295.8" r="6.3" fill="none" stroke="#79c143" stroke-width="1.3"/><path d="M102.7,296.0 l2.3,2.5 l4.3,-5" fill="none" stroke="#79c143" stroke-width="1.5"/><path d="M122.5,290.3 h4.5 l1,1.5 h6 v5 M122.5,291.8 v9 h7" fill="none" stroke="#777" stroke-width="1"/><path d="M122.5,290.3 h4.5 l1,1.5 h-5.5 z" fill="#c4c4c4"/><path d="M132.5,296.3 l4,2.3 v3.5 l-4,2.3 l-4,-2.3 v-3.5 z" fill="#1e8fd8"/><path d="M132.5,296.3 l4,2.3 l-4,2.3 l-4,-2.3 z" fill="#fff" stroke="#1e8fd8" stroke-width="0.5"/><circle cx="209.8" cy="295.8" r="6.3" fill="url(#rg)" stroke="#666" stroke-width="0.8"/><circle cx="209.8" cy="295.8" r="4.6" fill="#f4f4f4" stroke="#999" stroke-width="0.6"/><circle cx="209.8" cy="295.8" r="2.1" fill="#222"/><path d="M74,319.5 q7.5,-8.5 15,0 q-7.5,8.5 -15,0 z" fill="#9a9a9a"/><circle cx="81.5" cy="319.5" r="3" fill="#f1f1f1"/><circle cx="81.5" cy="319.5" r="1.6" fill="#9a9a9a"/><circle cx="105.9" cy="319.5" r="6.3" fill="none" stroke="#79c143" stroke-width="1.3"/><path d="M102.7,319.7 l2.3,2.5 l4.3,-5" fill="none" stroke="#79c143" stroke-width="1.5"/><path d="M122.5,314.0 h4.5 l1,1.5 h6 v5 M122.5,315.5 v9 h7" fill="none" stroke="#777" stroke-width="1"/><path d="M122.5,314.0 h4.5 l1,1.5 h-5.5 z" fill="#c4c4c4"/><path d="M132.5,320.0 l4,2.3 v3.5 l-4,2.3 l-4,-2.3 v-3.5 z" fill="#1e8fd8"/><path d="M132.5,320.0 l4,2.3 l-4,2.3 l-4,-2.3 z" fill="#fff" stroke="#1e8fd8" stroke-width="0.5"/><circle cx="205.8" cy="319.5" r="6.3" fill="url(#rg)" stroke="#666" stroke-width="0.8"/><path d="M74,342.8 q7.5,-8.5 15,0 q-7.5,8.5 -15,0 z" fill="#9a9a9a"/><circle cx="81.5" cy="342.8" r="3" fill="#f1f1f1"/><circle cx="81.5" cy="342.8" r="1.6" fill="#9a9a9a"/><circle cx="105.9" cy="342.8" r="6.3" fill="none" stroke="#79c143" stroke-width="1.3"/><path d="M102.7,343.0 l2.3,2.5 l4.3,-5" fill="none" stroke="#79c143" stroke-width="1.5"/><path d="M122.5,337.3 h4.5 l1,1.5 h6 v5 M122.5,338.8 v9 h7" fill="none" stroke="#777" stroke-width="1"/><path d="M122.5,337.3 h4.5 l1,1.5 h-5.5 z" fill="#c4c4c4"/><path d="M132.5,343.3 l4,2.3 v3.5 l-4,2.3 l-4,-2.3 v-3.5 z" fill="#1e8fd8"/><path d="M132.5,343.3 l4,2.3 l-4,2.3 l-4,-2.3 z" fill="#fff" stroke="#1e8fd8" stroke-width="0.5"/><circle cx="205.8" cy="342.8" r="6.3" fill="url(#rg)" stroke="#666" stroke-width="0.8"/><rect x="1483.2" y="115.2" width="13.6" height="13.6" rx="1.5" fill="none" stroke="#3dba72" stroke-width="1.3"/><rect x="1485.5" y="117.5" width="9" height="9" fill="#3dba72"/><path d="M1487.5,120.5 v5 M1490.0,118.5 v7 M1492.5,118.5 v4" stroke="#fff" stroke-width="1.1"/><path d="M1486.0,147.0 a3,3 0 0 1 0,-6 a4.5,4.5 0 0 1 8.5,-1 a3.2,3.2 0 0 1 0.5,7 z" fill="none" stroke="#3dba72" stroke-width="1.2"/><path d="M1490.5,140.5 v4.5 M1488.5,143.0 l2,2.2 l2,-2.2" fill="none" stroke="#3dba72" stroke-width="1.2"/><path d="M1486.0,167.5 a3,3 0 0 1 0,-6 a4.5,4.5 0 0 1 8.5,-1 a3.2,3.2 0 0 1 0.5,7 z" fill="none" stroke="#3dba72" stroke-width="1.2"/><path d="M1490.5,161 v4.5 M1488.5,163.5 l2,2.2 l2,-2.2" fill="none" stroke="#3dba72" stroke-width="1.2"/><path d="M1484,184.5 A6,6 0 0 1 1495,180.5" fill="none" stroke="#3dba72" stroke-width="1.6"/><path d="M1492.2,178.6 L1498,176.5 L1496.8,182.6 Z" fill="#3dba72"/><path d="M1496,183.5 A6,6 0 0 1 1485,187.5" fill="none" stroke="#3dba72" stroke-width="1.6"/><path d="M1487.8,189.4 L1482,191.5 L1483.2,185.4 Z" fill="#3dba72"/><path d="M1483.3,196.8 h14 v11 h-7.5 l-3,3.2 v-3.2 h-3.5 z" fill="none" stroke="#3dba72" stroke-width="1.2"/><text x="1490.3" y="205.8" font-family="Liberation Sans" font-weight="bold" font-size="9.5" fill="#3dba72" text-anchor="middle">?</text><path d="M1483.5,217.5 h8 l2,2 v3 M1483.5,217.5 v14 h6" fill="none" stroke="#3dba72" stroke-width="1.2"/><path d="M1485.5,221 h5 M1485.5,224 h4 M1485.5,227 h3" stroke="#3dba72" stroke-width="1"/><circle cx="1494" cy="228" r="4.3" fill="#3dba72"/><rect x="1493.4" y="226.5" width="1.3" height="3.8" fill="#fff"/><rect x="1493.4" y="224.6" width="1.3" height="1.2" fill="#fff"/><rect x="1486.5" y="333.7" width="12.3" height="12.3" rx="2.5" fill="url(#cbg)" stroke="#555" stroke-width="1"/><path d="M1489.3,340.2 l2.5,3.3 l4.7,-7.5" fill="none" stroke="#111" stroke-width="1.4"/><rect x="1486.5" y="363.8" width="12.3" height="12.3" rx="2.5" fill="url(#cbg)" stroke="#555" stroke-width="1"/><path d="M1489.3,370.3 l2.5,3.3 l4.7,-7.5" fill="none" stroke="#111" stroke-width="1.4"/><rect x="1486.5" y="393.8" width="12.3" height="12.3" rx="2.5" fill="url(#cbg)" stroke="#555" stroke-width="1"/><path d="M1489.3,400.3 l2.5,3.3 l4.7,-7.5" fill="none" stroke="#111" stroke-width="1.4"/></svg>
</body></html>
